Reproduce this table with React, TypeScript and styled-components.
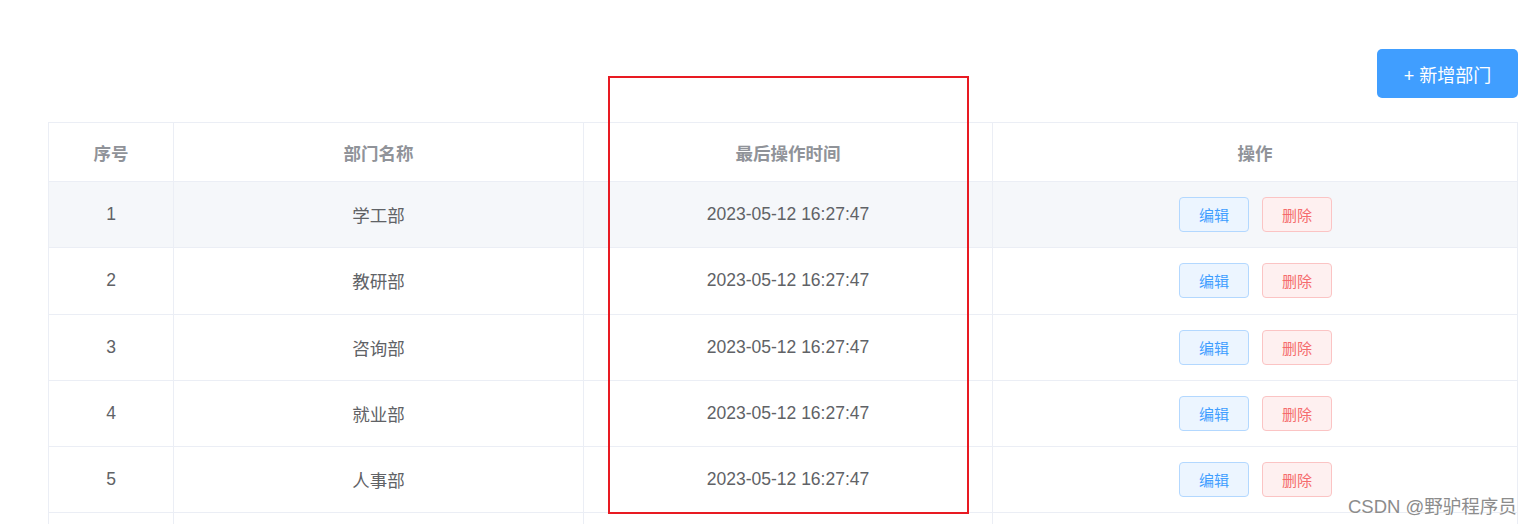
import React from "react";
import styled, { createGlobalStyle } from "styled-components";

interface iDept {
  id: number;
  name: string;
  updateTime: string;
}

const depts: Array<iDept> = [
  { id: 1, name: "学工部", updateTime: "2023-05-12 16:27:47" },
  { id: 2, name: "教研部", updateTime: "2023-05-12 16:27:47" },
  { id: 3, name: "咨询部", updateTime: "2023-05-12 16:27:47" },
  { id: 4, name: "就业部", updateTime: "2023-05-12 16:27:47" },
  { id: 5, name: "人事部", updateTime: "2023-05-12 16:27:47" },
  { id: 6, name: "行政部", updateTime: "2023-05-12 16:27:47" },
];

const GlobalStyle = createGlobalStyle`
  html, body {
    margin: 0;
    padding: 0;
    height: 524px;
    overflow: hidden;
    background: #fff;
    font-family: "Liberation Sans", "Noto Sans CJK SC", sans-serif;
  }
`;

const Page = styled.div`
  position: relative;
  padding: 49px 17px 0 48px;
`;

const Toolbar = styled.div`
  display: flex;
  justify-content: flex-end;
  margin-bottom: 24px;
`;

const AddButton = styled.button`
  width: 141px;
  height: 49px;
  border: none;
  border-radius: 5px;
  background: #409eff;
  color: #fff;
  font-family: inherit;
  font-size: 18px;
  cursor: pointer;
  padding: 0;
`;

const Table = styled.table`
  width: 1470px;
  table-layout: fixed;
  border-collapse: collapse;
  border-top: 1px solid #ebeef5;
  border-left: 1px solid #ebeef5;
`;

const HeadCell = styled.th`
  height: 58px;
  padding: 0;
  border-right: 1px solid #ebeef5;
  border-bottom: 1px solid #ebeef5;
  color: #909399;
  font-size: 17.5px;
  font-weight: bold;
  text-align: center;
`;

interface iRowProps {
  readonly highlight: boolean;
}

const Row = styled.tr<iRowProps>`
  background: ${(props) => (props.highlight ? "#f5f7fa" : "#fff")};
`;

const Cell = styled.td`
  height: 65.25px;
  padding: 0;
  border-right: 1px solid #ebeef5;
  border-bottom: 1px solid #ebeef5;
  color: #606266;
  font-size: 17.5px;
  text-align: center;
`;

const Actions = styled.div`
  display: flex;
  justify-content: center;
  gap: 13px;
  padding-left: 1px;
`;

interface iPlainProps {
  readonly kind: "primary" | "danger";
}

const PlainButton = styled.button<iPlainProps>`
  width: 70px;
  height: 35px;
  padding: 0;
  border-radius: 4px;
  font-family: inherit;
  font-size: 15px;
  cursor: pointer;
  ${(props) =>
    props.kind === "primary"
      ? "color: #409eff; background: #ecf5ff; border: 1px solid #b3d8ff;"
      : "color: #f56c6c; background: #fef0f0; border: 1px solid #fbc4c4;"}
`;

const Marker = styled.div`
  position: absolute;
  left: 608px;
  top: 76px;
  width: 357px;
  height: 434px;
  border: 2px solid #e81a22;
  pointer-events: none;
`;

const Watermark = styled.div`
  position: absolute;
  left: 1348px;
  top: 492px;
  font-size: 18.5px;
  color: #8c8c8c;
  text-shadow: 0 0 2px #fff, 0 0 1px #fff;
  white-space: nowrap;
`;

const App: React.FC = () => {
  return (
    <Page>
      <GlobalStyle />
      <Toolbar>
        <AddButton>+ 新增部门</AddButton>
      </Toolbar>
      <Table>
        <colgroup>
          <col style={{ width: 125 }} />
          <col style={{ width: 410 }} />
          <col style={{ width: 409 }} />
          <col style={{ width: 525 }} />
        </colgroup>
        <thead>
          <tr>
            <HeadCell>序号</HeadCell>
            <HeadCell>部门名称</HeadCell>
            <HeadCell>最后操作时间</HeadCell>
            <HeadCell>操作</HeadCell>
          </tr>
        </thead>
        <tbody>
          {depts.map((dept: iDept, index: number) => (
            <Row key={dept.id} highlight={index === 0}>
              <Cell>{dept.id}</Cell>
              <Cell>{dept.name}</Cell>
              <Cell>{dept.updateTime}</Cell>
              <Cell>
                <Actions>
                  <PlainButton kind="primary">编辑</PlainButton>
                  <PlainButton kind="danger">删除</PlainButton>
                </Actions>
              </Cell>
            </Row>
          ))}
        </tbody>
      </Table>
      <Marker />
      <Watermark>CSDN @野驴程序员</Watermark>
    </Page>
  );
};

export default App;
